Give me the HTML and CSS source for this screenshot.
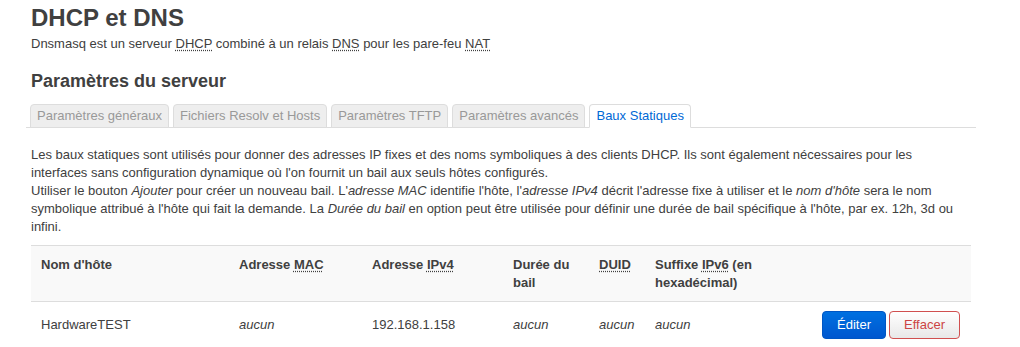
FILE: index.html
```
<!DOCTYPE html>
<html lang="fr">
<head>
<meta charset="utf-8">
<title>DHCP et DNS</title>
<link rel="stylesheet" href="styles.css">
</head>
<body>
<div class="page">
  <h2 class="page-title">DHCP et DNS</h2>
  <div class="page-desc">Dnsmasq est un serveur <abbr title="Dynamic Host Configuration Protocol">DHCP</abbr> combiné à un relais <abbr title="Domain Name System">DNS</abbr> pour les pare-feu <abbr title="Network Address Translation">NAT</abbr></div>

  <h3 class="section-title">Paramètres du serveur</h3>

  <ul class="tabs">
    <li class="tab"><a href="#">Paramètres généraux</a></li>
    <li class="tab"><a href="#">Fichiers Resolv et Hosts</a></li>
    <li class="tab"><a href="#">Paramètres TFTP</a></li>
    <li class="tab"><a href="#">Paramètres avancés</a></li>
    <li class="tab active"><a href="#">Baux Statiques</a></li>
  </ul>

  <div class="section-desc">Les baux statiques sont utilisés pour donner des adresses IP fixes et des noms symboliques à des clients DHCP. Ils sont également nécessaires pour les interfaces sans configuration dynamique où l'on fournit un bail aux seuls hôtes configurés.<br>Utiliser le bouton <em>Ajouter</em> pour créer un nouveau bail. L'<em>adresse MAC</em> identifie l'hôte, l'<em>adresse IPv4</em> décrit l'adresse fixe à utiliser et le <em>nom d'hôte</em> sera le nom symbolique attribué à l'hôte qui fait la demande. La <em>Durée du bail</em> en option peut être utilisée pour définir une durée de bail spécifique à l'hôte, par ex. 12h, 3d ou infini.</div>

  <table class="leases">
    <colgroup>
      <col class="c-host">
      <col class="c-mac">
      <col class="c-ip">
      <col class="c-lease">
      <col class="c-duid">
      <col class="c-ipv6">
      <col class="c-actions">
    </colgroup>
    <thead>
      <tr>
        <th>Nom d'hôte</th>
        <th>Adresse <abbr title="Media Access Control">MAC</abbr></th>
        <th>Adresse <abbr title="Internet Protocol Version 4">IPv4</abbr></th>
        <th>Durée du bail</th>
        <th><abbr title="DHCP Unique Identifier">DUID</abbr></th>
        <th>Suffixe <abbr title="Internet Protocol Version 6">IPv6</abbr> (en hexadécimal)</th>
        <th></th>
      </tr>
    </thead>
    <tbody>
      <tr>
        <td>HardwareTEST</td>
        <td><em>aucun</em></td>
        <td>192.168.1.158</td>
        <td><em>aucun</em></td>
        <td><em>aucun</em></td>
        <td><em>aucun</em></td>
        <td class="actions"><div class="btn-group"><button class="btn btn-edit">Éditer</button><button class="btn btn-remove">Effacer</button></div></td>
      </tr>
    </tbody>
  </table>
</div>
</body>
</html>
```

FILE: styles.css
```
html, body {
  margin: 0;
  padding: 0;
  background: #fff;
}

body {
  font-family: "Liberation Sans", Arial, sans-serif;
  font-size: 13px;
  line-height: 18px;
  color: #404040;
}

.page {
  width: 940px;
  margin-left: 31px;
}

.page-title {
  margin: 3px 0 0;
  font-size: 24px;
  line-height: 30px;
  font-weight: bold;
  color: #404040;
}

.page-desc {
  margin-top: 2px;
}

abbr {
  text-decoration: underline dotted;
  text-underline-offset: 2px;
  cursor: help;
}

.section-title {
  margin: 16px 0 11px;
  font-size: 18px;
  line-height: 24px;
  font-weight: bold;
  color: #404040;
}

.tabs {
  list-style: none;
  margin: 0 -5px;
  padding: 0 0 0 4px;
  display: flex;
  gap: 4px;
  border-bottom: 1px solid #ddd;
}

.tab {
  margin-bottom: -1px;
}

.tab a {
  display: block;
  padding: 0 6px;
  line-height: 22px;
  border: 1px solid #ddd;
  border-radius: 4px 4px 0 0;
  background: #eee;
  color: #999;
  text-decoration: none;
}

.tab.active a {
  background: #fff;
  color: #0069d6;
  border-bottom-color: #fff;
}

.section-desc {
  margin: 18px 0 0;
}

.leases {
  width: 100%;
  margin-top: 9px;
  border-collapse: collapse;
  table-layout: fixed;
}

.c-host { width: 198px; }
.c-mac { width: 133px; }
.c-ip { width: 141px; }
.c-lease { width: 86px; }
.c-duid { width: 56px; }
.c-ipv6 { width: 130px; }

.leases th {
  background: #f9f9f9;
  border-top: 1px solid #ddd;
  border-bottom: 1px solid #ddd;
  padding: 10px 10px 9px;
  text-align: left;
  vertical-align: top;
  font-weight: bold;
}

.leases td {
  padding: 9px 10px 9px;
  text-align: left;
  vertical-align: middle;
}

.leases td.actions {
  padding-right: 11px;
}

.btn-group {
  display: flex;
  justify-content: flex-end;
  gap: 3px;
}

.btn {
  display: block;
  font-family: inherit;
  font-size: 13px;
  line-height: 15px;
  padding: 5px 14px 6px;
  border-radius: 4px;
  cursor: pointer;
}

.btn-edit {
  color: #fff;
  border: 1px solid #0056c4;
  background: linear-gradient(#0070e0, #0057cf);
}

.btn-remove {
  color: #c44;
  border: 1px solid #d05050;
  background: linear-gradient(#ffffff, #e8e8e8);
}
```
